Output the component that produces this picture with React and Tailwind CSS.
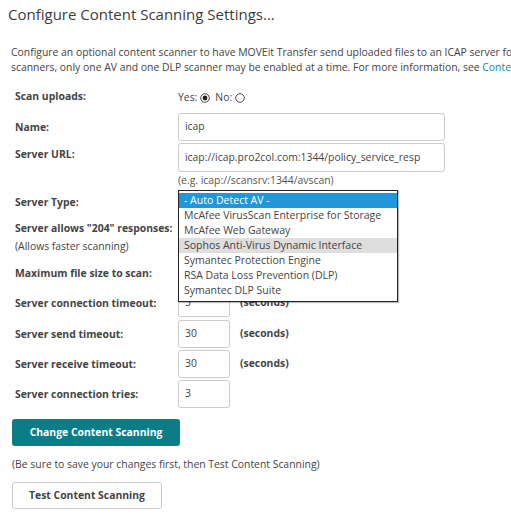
import React from "react";

const font = { fontFamily: '"Open Sans", "Liberation Sans", sans-serif' };

function Radio({ checked }) {
  return (
    <svg width="10" height="10" viewBox="0 0 10 10" className="inline-block">
      <circle cx="5" cy="5" r="4.3" fill="white" stroke="#333" strokeWidth="0.9" />
      {checked && <circle cx="5" cy="5" r="2.4" fill="#222" />}
    </svg>
  );
}

function Label({ children, className = "" }) {
  return (
    <div className={"w-[163px] shrink-0 text-[10.4px] font-bold leading-[15px] text-[#444] whitespace-nowrap " + className}>
      {children}
    </div>
  );
}

function SmallRow({ label, value, seconds = true, className = "" }) {
  return (
    <div className={"flex items-center h-[28px] " + className}>
      <Label>{label}</Label>
      <div className="w-[52px] h-[28px] border border-[#ccc] rounded-[3px] bg-white flex items-center pl-[6px] text-[10.4px] text-[#444]">
        {value}
      </div>
      {seconds && <span className="ml-[10px] text-[10.4px] font-bold text-[#444]">(seconds)</span>}
    </div>
  );
}

const options = [
  "- Auto Detect AV -",
  "McAfee VirusScan Enterprise for Storage",
  "McAfee Web Gateway",
  "Sophos Anti-Virus Dynamic Interface",
  "Symantec Protection Engine",
  "RSA Data Loss Prevention (DLP)",
  "Symantec DLP Suite",
];

export default function App() {
  return (
    <div className="w-[511px] h-[517px] overflow-hidden bg-white text-[#444]" style={font}>
      <div className="w-[700px]">
        <h1 className="ml-[8px] pt-[4px] text-[15px] leading-[20px] font-normal text-[#3c3c3c]">
          Configure Content Scanning Settings...
        </h1>
        <div className="ml-[11px] mt-[21px] text-[10.4px] leading-[15px] text-[#444] whitespace-nowrap">
          <div>Configure an optional content scanner to have MOVEit Transfer send uploaded files to an ICAP server for scanning. If you configure multiple</div>
          <div>
            scanners, only one AV and one DLP scanner may be enabled at a time. For more information, see{" "}
            <span className="text-[#138891]">Content Scanning</span>.
          </div>
        </div>

        <div className="ml-[15px] mt-[11px] flex flex-col">
          <div className="flex items-center h-[20px]">
            <Label>Scan uploads:</Label>
            <div className="flex items-center gap-[3px] text-[10.4px] text-[#444] pt-[4px]">
              <span>Yes:</span>
              <Radio checked />
              <span className="ml-[2px]">No:</span>
              <Radio />
            </div>
          </div>

          <div className="flex items-center h-[28px] mt-[7px]">
            <Label>Name:</Label>
            <div className="w-[267px] h-[28px] border border-[#ccc] rounded-[3px] flex items-center pl-[6px] text-[10.4px] text-[#444]">
              icap
            </div>
          </div>

          <div className="flex items-start h-[29px] mt-[2px]">
            <Label className="pt-[4px]">Server URL:</Label>
            <div className="w-[267px] h-[29px] border border-[#ccc] rounded-[3px] flex items-center pl-[6px] text-[10.4px] text-[#444]">
              icap://icap.pro2col.com:1344/policy_service_resp
            </div>
          </div>
          <div className="flex h-[15px] mt-[1px]">
            <div className="w-[163px]" />
            <div className="text-[10.4px] leading-[15px] text-[#555]">(e.g. icap://scansrv:1344/avscan)</div>
          </div>

          <div className="relative flex items-center h-[22px] mt-[3px]">
            <Label>Server Type:</Label>
            <div className="w-[220px] h-[22px] border border-[#ccc] rounded-[3px] text-[10.4px] pl-[6px] flex items-center">
              - Auto Detect AV -
            </div>
            <div className="absolute left-[163px] top-[-1px] w-[220px] border border-[#222] bg-white pt-[2px] pb-[3px] z-10 shadow-[1px_1px_1px_rgba(0,0,0,0.25)]">
              {options.map((o, i) => (
                <div
                  key={o}
                  className={
                    "h-[15px] leading-[15px] pl-[5px] text-[10.5px] whitespace-nowrap " +
                    (i === 0
                      ? "bg-[#1f97d8] text-white"
                      : i === 3
                      ? "bg-[#dedede] text-[#444]"
                      : "text-[#444]")
                  }
                >
                  {o}
                </div>
              ))}
            </div>
          </div>

          <div className="flex items-start mt-[8px]">
            <Label>Server allows "204" responses:</Label>
            <input type="checkbox" defaultChecked className="mt-[2px]" />
          </div>
          <div className="text-[10.4px] leading-[15px] text-[#444] mt-[3px]">(Allows faster scanning)</div>

          <div className="flex items-center h-[20px] mt-[9px]">
            <Label>Maximum file size to scan:</Label>
            <div className="w-[60px] h-[20px] border border-[#ccc] rounded-[3px]" />
          </div>

          <SmallRow label="Server connection timeout:" value="5" className="mt-[6px]" />
          <SmallRow label="Server send timeout:" value="30" className="mt-[3px]" />
          <SmallRow label="Server receive timeout:" value="30" className="mt-[2px]" />
          <SmallRow label="Server connection tries:" value="3" seconds={false} className="mt-[2px]" />
        </div>

        <div className="ml-[12px] mt-[11px]">
          <div className="w-[168px] h-[27px] rounded-[3px] bg-[#0c7d86] text-white text-[10.4px] font-bold flex items-center justify-center">
            Change Content Scanning
          </div>
          <div className="mt-[11px] text-[10.4px] leading-[15px] text-[#444]">
            (Be sure to save your changes first, then Test Content Scanning)
          </div>
          <div className="mt-[10px] w-[150px] h-[27px] rounded-[3px] border border-[#ccc] bg-white text-[#444] text-[10.4px] font-bold flex items-center justify-center">
            Test Content Scanning
          </div>
        </div>
      </div>
    </div>
  );
}
